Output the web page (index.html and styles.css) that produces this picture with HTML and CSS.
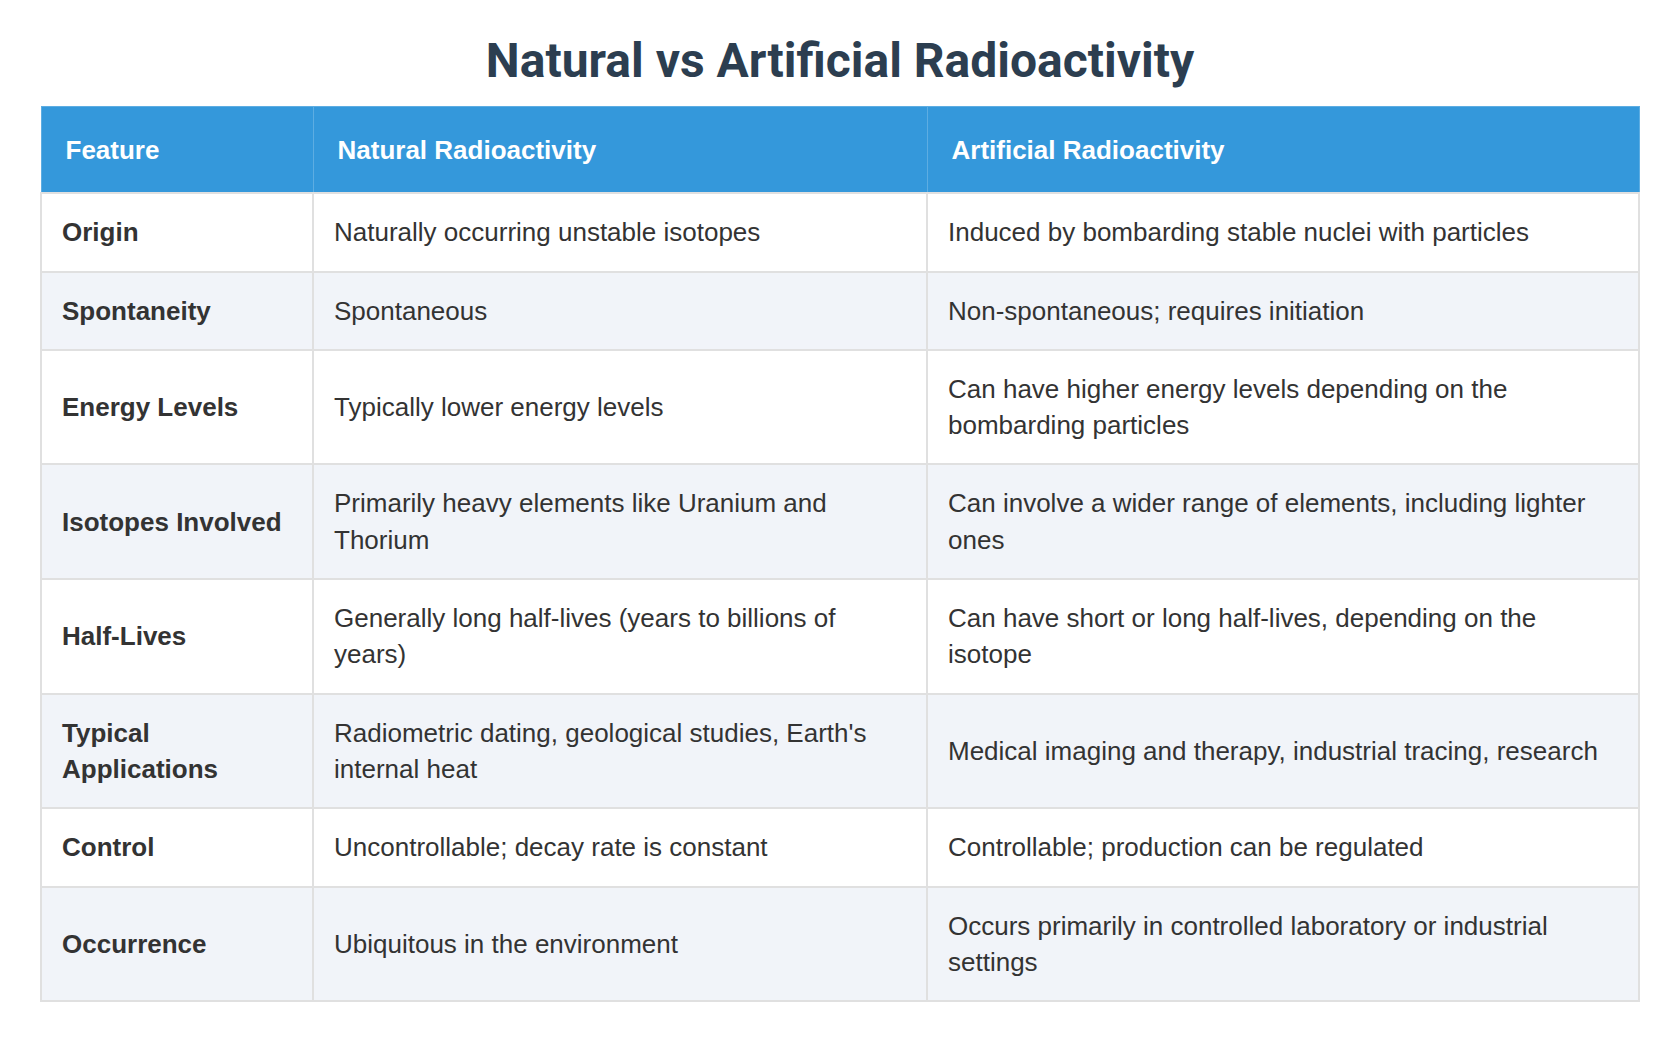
FILE: index.html
```html
<!DOCTYPE html>
<html lang="en">
<head>
<meta charset="utf-8">
<title>Natural vs Artificial Radioactivity</title>
<link rel="stylesheet" href="styles.css">
</head>
<body>
<div class="page">
  <h1 class="title">Natural vs Artificial Radioactivity</h1>
  <table class="compare">
    <colgroup>
      <col class="col-feature">
      <col class="col-natural">
      <col class="col-artificial">
    </colgroup>
    <thead>
      <tr>
        <th>Feature</th>
        <th>Natural Radioactivity</th>
        <th>Artificial Radioactivity</th>
      </tr>
    </thead>
    <tbody>
      <tr>
        <td class="feat">Origin</td>
        <td>Naturally occurring unstable isotopes</td>
        <td>Induced by bombarding stable nuclei with particles</td>
      </tr>
      <tr>
        <td class="feat">Spontaneity</td>
        <td>Spontaneous</td>
        <td>Non-spontaneous; requires initiation</td>
      </tr>
      <tr>
        <td class="feat">Energy Levels</td>
        <td>Typically lower energy levels</td>
        <td>Can have higher energy levels depending on the bombarding particles</td>
      </tr>
      <tr>
        <td class="feat">Isotopes Involved</td>
        <td>Primarily heavy elements like Uranium and Thorium</td>
        <td>Can involve a wider range of elements, including lighter ones</td>
      </tr>
      <tr>
        <td class="feat">Half-Lives</td>
        <td>Generally long half-lives (years to billions of years)</td>
        <td>Can have short or long half-lives, depending on the isotope</td>
      </tr>
      <tr>
        <td class="feat">Typical Applications</td>
        <td>Radiometric dating, geological studies, Earth's internal heat</td>
        <td>Medical imaging and therapy, industrial tracing, research</td>
      </tr>
      <tr>
        <td class="feat">Control</td>
        <td>Uncontrollable; decay rate is constant</td>
        <td>Controllable; production can be regulated</td>
      </tr>
      <tr>
        <td class="feat">Occurrence</td>
        <td>Ubiquitous in the environment</td>
        <td>Occurs primarily in controlled laboratory or industrial settings</td>
      </tr>
    </tbody>
  </table>
</div>
</body>
</html>
```

FILE: styles.css
```css
html, body {
  margin: 0;
  padding: 0;
  background: #ffffff;
}

.page {
  padding: 32px 40px 40px;
  font-family: "Liberation Sans", Arial, sans-serif;
  color: #333333;
}

.title {
  margin: 0 0 17px;
  font-family: Roboto, "Liberation Sans", sans-serif;
  font-weight: 700;
  font-size: 48px;
  line-height: normal;
  color: #2c3e50;
  text-align: center;
}

.compare {
  width: 100%;
  border-collapse: collapse;
  table-layout: fixed;
  font-size: 26px;
  line-height: 36.3px;
}

.col-feature { width: 272px; }
.col-natural { width: 614px; }
.col-artificial { width: auto; }

.compare th {
  background: #3498db;
  color: #ffffff;
  font-weight: 700;
  text-align: left;
  padding: 24.5px 24px;
  border: 1px solid #5dade2;
}

.compare td {
  padding: 20px 20px;
  border: 2px solid #e0e0e0;
  vertical-align: middle;
}

.compare tbody tr:nth-child(odd) { background: #ffffff; }
.compare tbody tr:nth-child(even) { background: #f1f4f9; }

.compare td.feat {
  font-weight: 700;
}
```
